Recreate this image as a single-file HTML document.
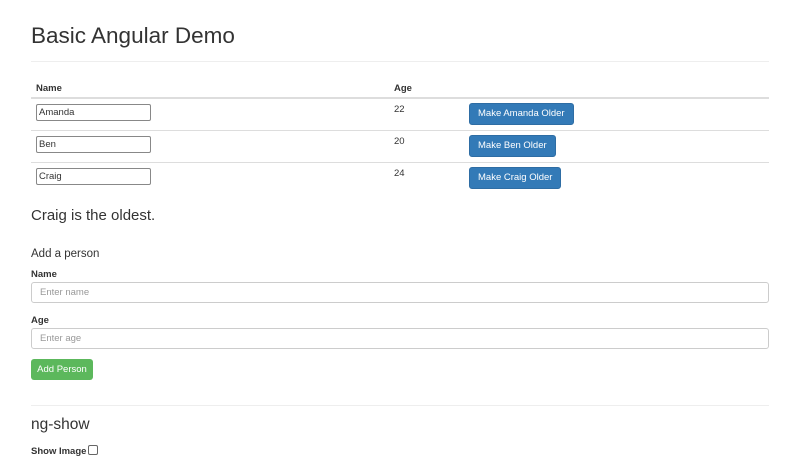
<!DOCTYPE html><html><head><style>
body{margin:0;width:800px;height:450px;overflow:hidden;background:#fff;font-family:"Liberation Sans",sans-serif;color:#333;position:relative}
.a{position:absolute;white-space:nowrap}
.hr{position:absolute;left:31px;width:738px;height:1px;background:#eee}
.ln{position:absolute;left:31px;width:738px;height:1px;background:#ddd}
.in{position:absolute;left:36px;width:111px;height:15px;border:1px solid #888;border-radius:2px;font-size:9.5px;line-height:15px;padding-left:2px;box-sizing:content-box}
.btn{position:absolute;left:469px;height:22px;background:#337ab7;border:1px solid #2e6da4;border-radius:3px;color:#fff;font-size:9.5px;line-height:20px;padding:0 8px;box-sizing:border-box}
.fc{position:absolute;left:31px;width:738px;height:21px;border:1px solid #ccc;border-radius:3px;box-sizing:border-box;font-size:9.5px;color:#999;line-height:19px;padding-left:8px}
b{font-size:9.5px}
</style></head><body>
<div class="a" style="left:31px;top:23px;font-size:22.5px">Basic Angular Demo</div>
<div class="hr" style="top:61px"></div>
<div class="a" style="left:36px;top:78px"><b>Name</b></div>
<div class="a" style="left:394px;top:78px"><b>Age</b></div>
<div class="ln" style="top:97px;height:2px"></div>
<div class="in" style="top:104px">Amanda</div><div class="a" style="left:394px;top:104px;font-size:9.5px">22</div><div class="btn" style="top:103px">Make Amanda Older</div>
<div class="ln" style="top:130px"></div>
<div class="in" style="top:136px">Ben</div><div class="a" style="left:394px;top:136px;font-size:9.5px">20</div><div class="btn" style="top:135px">Make Ben Older</div>
<div class="ln" style="top:162px"></div>
<div class="in" style="top:168px">Craig</div><div class="a" style="left:394px;top:168px;font-size:9.5px">24</div><div class="btn" style="top:167px">Make Craig Older</div>
<div class="a" style="left:31px;top:207px;font-size:15px">Craig is the oldest.</div>
<div class="a" style="left:31px;top:248px;font-size:11.5px">Add a person</div>
<div class="a" style="left:31px;top:264px"><b>Name</b></div>
<div class="fc" style="top:282px">Enter name</div>
<div class="a" style="left:31px;top:310px"><b>Age</b></div>
<div class="fc" style="top:328px">Enter age</div>
<div class="a" style="left:31px;top:359px;width:62px;height:21px;background:#5cb85c;border-radius:3px;color:#fff;font-size:9.5px;line-height:21px;text-align:center">Add Person</div>
<div class="hr" style="top:405px"></div>
<div class="a" style="left:31px;top:416px;font-size:15.5px">ng-show</div>
<div class="a" style="left:31px;top:441px"><b>Show Image</b><span style="display:inline-block;margin-left:2px;width:8px;height:8px;border:1px solid #666;border-radius:2px;vertical-align:-1px"></span></div>
</body></html>
